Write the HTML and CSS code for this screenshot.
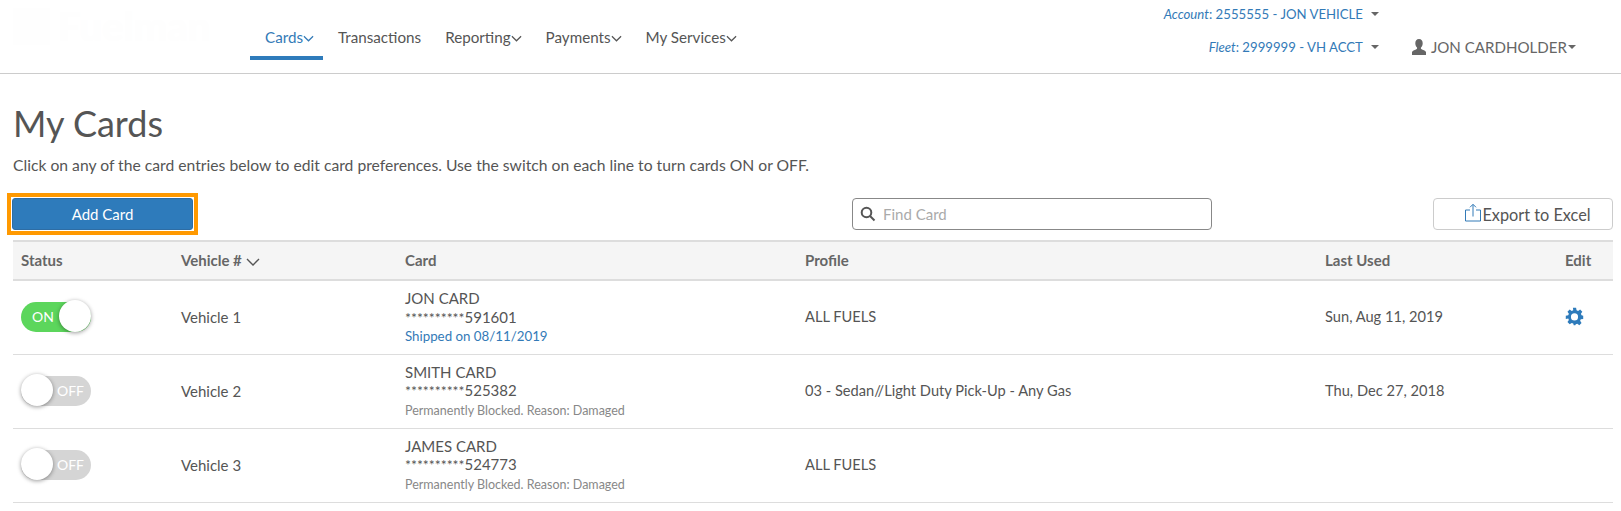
FILE: index.html
```html
<!DOCTYPE html>
<html lang="en">
<head>
    <meta charset="UTF-8">
    <title>My Cards</title>
    <link rel="stylesheet" href="styles.css">
</head>
<body>

<header class="topbar">
    <div class="logo"><span class="logo-mark"></span><span>Fuelman</span></div>
    <nav class="nav">
        <a class="nav-item active">Cards<svg class="chev" viewBox="0 0 12 7"><path d="M1 1l5 5 5-5"/></svg></a>
        <a class="nav-item">Transactions</a>
        <a class="nav-item">Reporting<svg class="chev" viewBox="0 0 12 7"><path d="M1 1l5 5 5-5"/></svg></a>
        <a class="nav-item">Payments<svg class="chev" viewBox="0 0 12 7"><path d="M1 1l5 5 5-5"/></svg></a>
        <a class="nav-item">My Services<svg class="chev" viewBox="0 0 12 7"><path d="M1 1l5 5 5-5"/></svg></a>
    </nav>
    <div class="acct">
        <div class="acct-line acct-first">
            <span class="acct-link"><em>Account</em>: 2555555 - JON VEHICLE</span><span class="caret caret-link"></span>
        </div>
        <div class="acct-line acct-second">
            <span class="acct-link"><em>Fleet</em>: 2999999 - VH ACCT</span><span class="caret caret-link"></span>
            <span class="user">
                <svg class="user-icon" viewBox="0 0 16 16"><path d="M8 0c2.400 0 3.700 1.800 3.700 4.200 0 1.700-.7 3.300-1.700 4.200-.3.900 0 1.500 1 2 1.700.8 3.500 1.300 4 2.600V16H1v-3c.5-1.300 2.300-1.800 4-2.600 1-.5 1.300-1.100 1-2-1-.9-1.700-2.500-1.700-4.200C4.300 1.800 5.600 0 8 0z"/></svg>
                JON CARDHOLDER<span class="caret"></span>
            </span>
        </div>
    </div>
</header>

<main class="page">
    <h1>My Cards</h1>
    <p class="intro">Click on any of the card entries below to edit card preferences. Use the switch on each line to turn cards ON or OFF.</p>

    <div class="toolbar">
        <div class="add-wrap"><button class="add-btn">Add Card</button></div>
        <div class="search">
            <svg class="search-icon" viewBox="0 0 16 16"><circle cx="6.500" cy="6.500" r="4.800"/><path d="M10 10l4.500 4.500"/></svg>
            <span>Find Card</span>
        </div>
        <button class="export-btn">
            <svg class="export-icon" viewBox="0 0 16 18"><path d="M5 6.500H.5v11h15v-11H11M8 13V1M5 3.800L8 .8l3 3"/></svg>Export to Excel
        </button>
    </div>

    <div class="row head">
        <div>Status</div>
        <div>Vehicle # <svg class="sort" viewBox="0 0 14 8"><path d="M1 1l6 6 6-6"/></svg></div>
        <div>Card</div>
        <div>Profile</div>
        <div>Last Used</div>
        <div>Edit</div>
    </div>

    <div class="row">
        <div><span class="switch on"><span class="switch-text">ON</span><span class="knob"></span></span></div>
        <div>Vehicle 1</div>
        <div class="card-cell">
            <div>JON CARD</div>
            <div><span class="stars">**********</span>591601</div>
            <div class="shipped">Shipped on 08/11/2019</div>
        </div>
        <div class="narrow">ALL FUELS</div>
        <div class="narrow">Sun, Aug 11, 2019</div>
        <div>
            <svg class="gear" viewBox="0 0 24 24"><path fill-rule="evenodd" d="M10 1h4l.6 3.100 1.900.8 2.600-1.800 2.800 2.800-1.800 2.600.8 1.900L23 11v4l-3.100.6-.8 1.900 1.800 2.600-2.800 2.800-2.600-1.800-1.900.8L13 23h-2l-.6-2.100-1.900-.8-2.600 1.800-2.800-2.800 1.800-2.600-.8-1.900L1 15v-4l3.100-.6.8-1.900-1.800-2.600 2.800-2.800 2.600 1.800 1.900-.8zM12 8a4.500 4.500 0 1 0 0 9 4.500 4.500 0 0 0 0-9z"/></svg>
        </div>
    </div>

    <div class="row">
        <div><span class="switch off"><span class="knob"></span><span class="switch-text">OFF</span></span></div>
        <div>Vehicle 2</div>
        <div class="card-cell">
            <div>SMITH CARD</div>
            <div><span class="stars">**********</span>525382</div>
            <div class="blocked">Permanently Blocked. Reason: Damaged</div>
        </div>
        <div class="narrow">03 - Sedan//Light Duty Pick-Up - Any Gas</div>
        <div class="narrow">Thu, Dec 27, 2018</div>
        <div></div>
    </div>

    <div class="row">
        <div><span class="switch off"><span class="knob"></span><span class="switch-text">OFF</span></span></div>
        <div>Vehicle 3</div>
        <div class="card-cell">
            <div>JAMES CARD</div>
            <div><span class="stars">**********</span>524773</div>
            <div class="blocked">Permanently Blocked. Reason: Damaged</div>
        </div>
        <div class="narrow">ALL FUELS</div>
        <div></div>
        <div></div>
    </div>
</main>

</body>
</html>
```

FILE: styles.css
```css
body {
    font-family: Lato, "Open Sans", sans-serif;
    font-size: 15px;
    color: #555;
    background: #fff;
    margin: 0;
}
.topbar {
    height: 73px;
    border-bottom: 1px solid #ccc;
    display: flex;
    padding-right: 45px;
}
.logo {
    width: 237px;
    margin-left: 13px;
    padding-top: 8px;
    height: 37px;
    display: flex;
    gap: 8px;
    font-size: 40px;
    font-weight: 900;
    line-height: 37px;
    color: #fefefe;
}
.logo-mark {
    width: 37px;
    height: 37px;
    background: #fefefe;
}
.nav {
    display: flex;
    height: 60px;
}
.nav-item {
    display: flex;
    align-items: center;
    padding: 18px 9px 0 15px;
    height: 38px;
    color: #555;
    font-size: 15.200px;
}
.nav-item.active {
    color: #337ab7;
    border-bottom: 4px solid #2e7bbb;
}
.chev {
    width: 11px;
    height: 7px;
    margin-top: 2px;
    fill: none;
    stroke: currentColor;
    stroke-width: 1.300;
}
.acct {
    display: flex;
    flex-direction: column;
    align-items: flex-end;
    margin-left: auto;
}
.acct-line {
    display: flex;
    align-items: center;
    font-size: 13.200px;
}
.acct-first {
    margin-top: 4px;
    height: 20px;
    padding-right: 197px;
}
.acct-second {
    margin-top: 13px;
    height: 20px;
}
.acct-link {
    color: #337ab7;
}
.caret {
    display: inline-block;
    width: 0;
    height: 0;
    border-left: 4px solid transparent;
    border-right: 4px solid transparent;
    border-top: 4px solid #666;
    margin-left: 1px;
}
.caret-link {
    margin-left: 8px;
}
.user {
    display: flex;
    align-items: center;
    margin-left: 32px;
    font-size: 15.100px;
    color: #666;
}
.user-icon {
    width: 16px;
    height: 16px;
    fill: #666;
    margin-right: 4px;
}
.page {
    padding: 0 8px 0 13px;
}
h1 {
    margin: 27px 0 0;
    font-size: 36px;
    font-weight: 400;
    line-height: 44px;
    color: #555;
}
.intro {
    margin: 10px 0 0;
    line-height: 20px;
    font-size: 15.700px;
}
.toolbar {
    display: flex;
    align-items: center;
    margin-top: 23px;
    height: 32px;
}
.add-wrap {
    margin-left: -6px;
    border: 4px solid #f90;
    padding: 1px;
    height: 32px;
    display: flex;
}
.add-btn {
    width: 181px;
    height: 32px;
    background: #2e7bbb;
    color: #fff;
    border: 1px solid #2e6da4;
    border-radius: 3px;
    font-family: inherit;
    font-size: 15px;
}
.search {
    width: 360px;
    height: 32px;
    box-sizing: border-box;
    margin-left: 654px;
    border: 1px solid #888;
    border-radius: 4px;
    display: flex;
    align-items: center;
    color: #aaa;
    font-size: 15px;
    padding-left: 7px;
}
.search-icon {
    width: 16px;
    height: 16px;
    margin-right: 7px;
    fill: none;
    stroke: #555;
    stroke-width: 2;
}
.export-btn {
    width: 180px;
    height: 32px;
    margin-left: auto;
    background: #fff;
    border: 1px solid #ccc;
    border-radius: 4px;
    font-family: inherit;
    font-size: 16.300px;
    color: #555;
    display: flex;
    align-items: center;
    justify-content: center;
    padding: 0 0 0 10px;
}
.export-icon {
    width: 16px;
    height: 19px;
    margin-right: 1px;
    margin-top: -3px;
    fill: none;
    stroke: #337ab7;
    stroke-width: 1;
}
.row {
    display: grid;
    grid-template-columns: 160px 224px 400px 520px 240px 55px;
    align-items: center;
    height: 74px;
    border-bottom: 1px solid #ddd;
    box-sizing: border-box;
}
.row > div {
    padding-left: 8px;
    padding-bottom: 2px;
}
.row > .card-cell {
    padding-bottom: 0;
}
.head {
    height: 41px;
    margin-top: 10px;
    background: #f5f5f5;
    border-top: 2px solid #ddd;
    border-bottom: 2px solid #ddd;
    font-weight: 700;
    color: #666;
    font-size: 15px;
}
.narrow {
    font-size: 14.650px;
}
.sort {
    width: 14px;
    height: 8px;
    fill: none;
    stroke: #555;
    stroke-width: 1.400;
    margin-left: 1px;
}
.card-cell {
    line-height: 18.500px;
    font-size: 15px;
}
.stars {
    font-size: 14px;
}
.shipped {
    font-size: 13.300px;
    color: #337ab7;
}
.blocked {
    font-size: 12.500px;
    color: #888;
    padding-top: 1px;
}
.switch {
    position: relative;
    display: flex;
    align-items: center;
    width: 70px;
    height: 30px;
    border-radius: 15px;
    font-size: 14px;
    color: #fff;
}
.switch.on {
    background: #5cd65c;
}
.switch.off {
    background: #d5d5d5;
}
.switch-text {
    position: absolute;
    top: 6px;
}
.on .switch-text {
    left: 11px;
}
.off .switch-text {
    right: 7px;
}
.knob {
    position: absolute;
    top: -2px;
    width: 32px;
    height: 32px;
    border-radius: 50%;
    background: #fff;
    box-shadow: 0 1px 4px rgba(0, 0, 0, 0.4);
}
.on .knob {
    right: 0;
}
.off .knob {
    left: 0;
}
.gear {
    width: 19px;
    height: 19px;
    fill: #2e7bbb;
    display: block;
}
```
